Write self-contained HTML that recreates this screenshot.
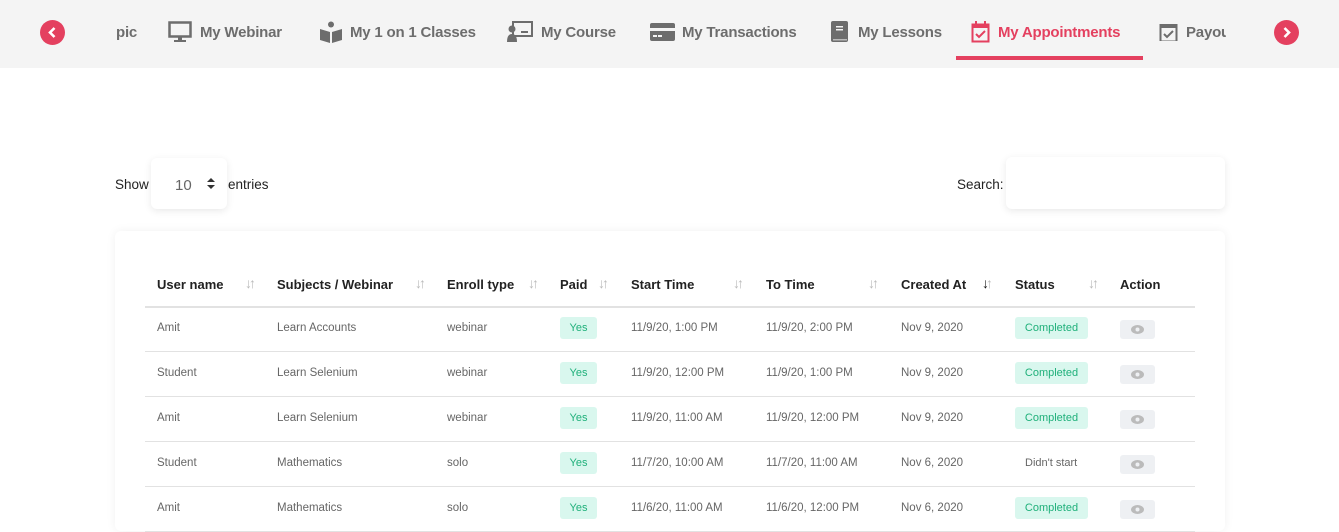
<!DOCTYPE html>
<html><head><style>
*{margin:0;padding:0;box-sizing:border-box}
html,body{width:1339px;height:532px;overflow:hidden}
body{background:#fff;font-family:"Liberation Sans",sans-serif;position:relative}
.nav{position:absolute;left:0;top:0;width:1339px;height:68px;background:#f4f4f4}
.circ{position:absolute;width:25px;height:25px;border-radius:50%;background:#e4405f;top:20px;color:#fff}
.ni{position:absolute;top:24px;font-size:15px;font-weight:bold;color:#6d6d6d;white-space:nowrap;letter-spacing:-0.2px}
.ni svg{position:absolute;top:-3px}
.a{position:absolute;font-size:13.5px;color:#222;top:177px}
.box{position:absolute;background:#fff;border-radius:6px;box-shadow:0 2px 8px rgba(0,0,0,.09)}
.card{position:absolute;left:115px;top:231px;width:1110px;height:300px;background:#fff;border-radius:6px;box-shadow:0 0 10px rgba(0,0,0,.06)}
.h{position:absolute;top:277px;font-size:13px;font-weight:bold;color:#222}
.s{position:absolute;top:275px;font-size:14px;color:#bbb;letter-spacing:-3px}
.line{position:absolute;left:145px;width:1050px;height:1px;background:#e2e2e2}
.c{position:absolute;font-size:11.5px;color:#666}
.yes{position:absolute;left:560px;width:37px;height:22px;background:#d9f7ee;color:#1fb07a;font-size:11px;text-align:center;line-height:22px;border-radius:3px}
.comp{position:absolute;left:1015px;width:73px;height:22px;background:#d9f7ee;color:#1fb07a;font-size:11px;text-align:center;line-height:22px;border-radius:3px}
.eye{position:absolute;left:1120px;width:35px;height:19px;background:#eef0f3;border-radius:3px}
.eye svg{position:absolute;left:11px;top:5px}
</style></head><body>
<div class="nav">
 <div class="circ" style="left:40px"><svg width="25" height="25"><path d="M14.5 8l-4.5 4.5 4.5 4.5" stroke="#fff" stroke-width="2.6" fill="none"/></svg></div>
 <div class="circ" style="left:1274px"><svg width="25" height="25"><path d="M10.5 8l4.5 4.5-4.5 4.5" stroke="#fff" stroke-width="2.6" fill="none"/></svg></div>
 <div class="ni" style="left:116px">pic</div>
 <div class="ni" style="left:168px"><svg width="24" height="22"><rect x="1.5" y="1.5" width="21" height="14" fill="none" stroke="#6d6d6d" stroke-width="2.5"/><rect x="10" y="16" width="4" height="3" fill="#6d6d6d"/><rect x="6" y="19" width="12" height="2" fill="#6d6d6d"/></svg><span style="margin-left:32px">My Webinar</span></div>
 <div class="ni" style="left:320px"><svg width="24" height="22"><circle cx="11" cy="3.5" r="3" fill="#6d6d6d"/><path d="M0 8l10 3v11L0 19zM22 8l-10 3v11l10-3z" fill="#6d6d6d"/></svg><span style="margin-left:30px">My 1 on 1 Classes</span></div>
 <div class="ni" style="left:507px"><svg width="26" height="22"><rect x="6" y="1" width="19" height="14" fill="none" stroke="#6d6d6d" stroke-width="2"/><circle cx="5" cy="8" r="3.5" fill="#6d6d6d"/><path d="M0 21q0-8 5-8 5 0 5 8z" fill="#6d6d6d"/><rect x="14" y="10" width="7" height="2" fill="#6d6d6d"/></svg><span style="margin-left:34px">My Course</span></div>
 <div class="ni" style="left:650px"><svg width="26" height="22"><rect x="0" y="2" width="25" height="18" rx="2" fill="#6d6d6d"/><rect x="0" y="7" width="25" height="3" fill="#f4f4f4"/><rect x="3" y="14" width="4" height="2" fill="#f4f4f4"/><rect x="8" y="14" width="4" height="2" fill="#f4f4f4"/></svg><span style="margin-left:32px">My Transactions</span></div>
 <div class="ni" style="left:831px"><svg width="20" height="22"><rect x="0" y="0" width="17" height="21" rx="2" fill="#6d6d6d"/><rect x="5" y="5" width="7" height="1.5" fill="#f4f4f4"/><rect x="5" y="8" width="7" height="1.5" fill="#f4f4f4"/><rect x="2" y="18" width="14" height="1.5" fill="#bbb"/></svg><span style="margin-left:27px">My Lessons</span></div>
 <div class="ni" style="left:971px;color:#e4405f"><svg width="20" height="22"><rect x="1.5" y="3.5" width="16" height="17" fill="none" stroke="#e4405f" stroke-width="2"/><rect x="1" y="3" width="17" height="4" fill="#e4405f"/><rect x="4" y="0" width="2" height="5" fill="#e4405f"/><rect x="13" y="0" width="2" height="5" fill="#e4405f"/><path d="M5 13l3 3 6-6" stroke="#e4405f" stroke-width="2" fill="none"/></svg><span style="margin-left:27px">My Appointments</span></div>
 <div class="ni" style="left:1159px;width:67px;overflow:hidden"><svg width="20" height="22"><rect x="1.5" y="3.5" width="16" height="17" fill="none" stroke="#6d6d6d" stroke-width="2"/><rect x="1" y="3" width="17" height="4" fill="#6d6d6d"/><rect x="4" y="0" width="2" height="5" fill="#6d6d6d"/><rect x="13" y="0" width="2" height="5" fill="#6d6d6d"/><path d="M5 13l3 3 6-6" stroke="#6d6d6d" stroke-width="2" fill="none"/></svg><span style="margin-left:27px">Payouts</span></div>
 <div style="position:absolute;left:956px;top:56px;width:187px;height:4px;background:#e4405f"></div>
</div>
<div class="a" style="left:115px">Show</div>
<div class="box" style="left:151px;top:158px;width:76px;height:51px"><span style="position:absolute;left:24px;top:19px;font-size:15px;color:#666">10</span><svg style="position:absolute;left:56px;top:20px" width="8" height="11"><path d="M0 4L4 0 8 4zM0 7h8L4 11z" fill="#333"/></svg></div>
<div class="a" style="left:228px">entries</div>
<div class="a" style="left:957px">Search:</div>
<div class="box" style="left:1006px;top:157px;width:219px;height:52px"></div>
<div class="card"></div>
<div class="h" style="left:157px">User name</div><div class="s" style="left:245px">↓↑</div>
<div class="h" style="left:277px">Subjects / Webinar</div><div class="s" style="left:415px">↓↑</div>
<div class="h" style="left:447px">Enroll type</div><div class="s" style="left:528px">↓↑</div>
<div class="h" style="left:560px">Paid</div><div class="s" style="left:598px">↓↑</div>
<div class="h" style="left:631px">Start Time</div><div class="s" style="left:733px">↓↑</div>
<div class="h" style="left:766px">To Time</div><div class="s" style="left:868px">↓↑</div>
<div class="h" style="left:901px">Created At</div><div class="s" style="left:982px"><b style="color:#111">↓</b>↑</div>
<div class="h" style="left:1015px">Status</div><div class="s" style="left:1088px">↓↑</div>
<div class="h" style="left:1120px">Action</div>
<div class="line" style="top:306px;height:2px"></div>

<div class="c" style="left:157px;top:322px">Amit</div><div class="c" style="left:277px;top:322px">Learn Accounts</div><div class="c" style="left:447px;top:322px">webinar</div><div class="yes" style="top:317px">Yes</div><div class="c" style="left:631px;top:322px">11/9/20, 1:00 PM</div><div class="c" style="left:766px;top:322px">11/9/20, 2:00 PM</div><div class="c" style="left:901px;top:322px">Nov 9, 2020</div><div class="comp" style="top:317px">Completed</div><div class="eye" style="top:320px"><svg width="13" height="9"><ellipse cx="6.5" cy="4.5" rx="6.5" ry="4.5" fill="#bbb"/><circle cx="6.5" cy="4.5" r="2" fill="#eef0f3"/></svg></div>
<div class="line" style="top:351px"></div>
<div class="c" style="left:157px;top:367px">Student</div><div class="c" style="left:277px;top:367px">Learn Selenium</div><div class="c" style="left:447px;top:367px">webinar</div><div class="yes" style="top:362px">Yes</div><div class="c" style="left:631px;top:367px">11/9/20, 12:00 PM</div><div class="c" style="left:766px;top:367px">11/9/20, 1:00 PM</div><div class="c" style="left:901px;top:367px">Nov 9, 2020</div><div class="comp" style="top:362px">Completed</div><div class="eye" style="top:365px"><svg width="13" height="9"><ellipse cx="6.5" cy="4.5" rx="6.5" ry="4.5" fill="#bbb"/><circle cx="6.5" cy="4.5" r="2" fill="#eef0f3"/></svg></div>
<div class="line" style="top:396px"></div>
<div class="c" style="left:157px;top:412px">Amit</div><div class="c" style="left:277px;top:412px">Learn Selenium</div><div class="c" style="left:447px;top:412px">webinar</div><div class="yes" style="top:407px">Yes</div><div class="c" style="left:631px;top:412px">11/9/20, 11:00 AM</div><div class="c" style="left:766px;top:412px">11/9/20, 12:00 PM</div><div class="c" style="left:901px;top:412px">Nov 9, 2020</div><div class="comp" style="top:407px">Completed</div><div class="eye" style="top:410px"><svg width="13" height="9"><ellipse cx="6.5" cy="4.5" rx="6.5" ry="4.5" fill="#bbb"/><circle cx="6.5" cy="4.5" r="2" fill="#eef0f3"/></svg></div>
<div class="line" style="top:441px"></div>
<div class="c" style="left:157px;top:457px">Student</div><div class="c" style="left:277px;top:457px">Mathematics</div><div class="c" style="left:447px;top:457px">solo</div><div class="yes" style="top:452px">Yes</div><div class="c" style="left:631px;top:457px">11/7/20, 10:00 AM</div><div class="c" style="left:766px;top:457px">11/7/20, 11:00 AM</div><div class="c" style="left:901px;top:457px">Nov 6, 2020</div><div class="c" style="left:1025px;top:457px;font-size:11px">Didn't start</div><div class="eye" style="top:455px"><svg width="13" height="9"><ellipse cx="6.5" cy="4.5" rx="6.5" ry="4.5" fill="#bbb"/><circle cx="6.5" cy="4.5" r="2" fill="#eef0f3"/></svg></div>
<div class="line" style="top:486px"></div>
<div class="c" style="left:157px;top:502px">Amit</div><div class="c" style="left:277px;top:502px">Mathematics</div><div class="c" style="left:447px;top:502px">solo</div><div class="yes" style="top:497px">Yes</div><div class="c" style="left:631px;top:502px">11/6/20, 11:00 AM</div><div class="c" style="left:766px;top:502px">11/6/20, 12:00 PM</div><div class="c" style="left:901px;top:502px">Nov 6, 2020</div><div class="comp" style="top:497px">Completed</div><div class="eye" style="top:500px"><svg width="13" height="9"><ellipse cx="6.5" cy="4.5" rx="6.5" ry="4.5" fill="#bbb"/><circle cx="6.5" cy="4.5" r="2" fill="#eef0f3"/></svg></div>
<div class="line" style="top:531px"></div>
</body></html>
